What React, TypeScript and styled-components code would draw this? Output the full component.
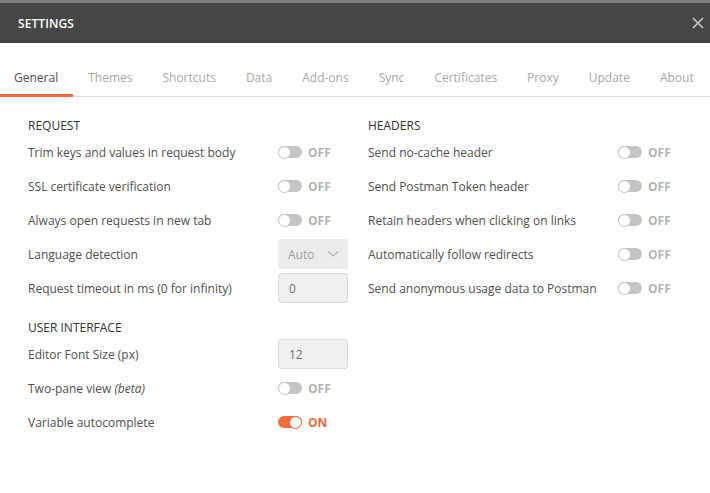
import React from "react";
import styled, { createGlobalStyle } from "styled-components";

const Global = createGlobalStyle`
  html, body { margin: 0; padding: 0; background: #ffffff; }
  body { font-family: "Open Sans", "Noto Sans", sans-serif; }
  * { box-sizing: border-box; }
`;

const Modal = styled.div`
  width: 710px;
  height: 493px;
  background: #ffffff;
  display: flex;
  flex-direction: column;
`;

const TitleBar = styled.div`
  height: 43px;
  background: #464646;
  border-top: 3px solid #7e7e7e;
  display: flex;
  align-items: center;
  justify-content: space-between;
  padding: 0 0 0 18px;
`;

const Title = styled.span`
  color: #ffffff;
  font-size: 12px;
  font-weight: 600;
  letter-spacing: 0.1px;
`;

const CloseBtn = styled.button`
  width: 24px;
  height: 24px;
  border: none;
  background: transparent;
  padding: 0;
  display: flex;
  align-items: center;
  justify-content: center;
  cursor: pointer;
`;

const Tabs = styled.div`
  display: flex;
  height: 54px;
  border-bottom: 1px solid #dedede;
`;

const Tab = styled.div<{ $active?: boolean }>`
  padding: 0 15px 8px 14px;
  margin-right: 1px;
  display: flex;
  align-items: flex-end;
  white-space: nowrap;
  font-size: 12px;
  color: ${(p) => (p.$active ? "#505050" : "#a8a8a8")};
  border-bottom: 3px solid ${(p) => (p.$active ? "#f26b3a" : "transparent")};
  margin-bottom: -1px;
`;

const Body = styled.div`
  display: grid;
  grid-template-columns: 320px 320px;
  column-gap: 20px;
  padding: 20px 28px 0;
  align-items: start;
`;

const Column = styled.div`
  display: flex;
  flex-direction: column;
`;

const Section = styled.div`
  display: flex;
  flex-direction: column;
  margin-bottom: 14px;
`;

const Heading = styled.div`
  height: 18px;
  line-height: 18px;
  font-size: 12px;
  color: #333333;
  text-transform: uppercase;
`;

const Row = styled.div`
  height: 34px;
  display: grid;
  grid-template-columns: 250px 70px;
  align-items: center;
`;

const Label = styled.span`
  font-size: 12px;
  color: #505050;
  white-space: nowrap;
  em { font-style: italic; }
`;

const ToggleWrap = styled.div`
  display: flex;
  align-items: center;
  gap: 6px;
`;

const Track = styled.div<{ $on?: boolean }>`
  width: 24px;
  height: 12px;
  border-radius: 6px;
  background: ${(p) => (p.$on ? "#f26b3a" : "#c4c4c4")};
  display: flex;
  justify-content: ${(p) => (p.$on ? "flex-end" : "flex-start")};
  align-items: center;
`;

const Knob = styled.div<{ $on?: boolean }>`
  width: 13px;
  height: 13px;
  border-radius: 50%;
  background: #ffffff;
  border: 1.5px solid ${(p) => (p.$on ? "#f26b3a" : "#c4c4c4")};
`;

const ToggleText = styled.span<{ $on?: boolean }>`
  font-size: 12px;
  font-weight: 700;
  color: ${(p) => (p.$on ? "#f26b3a" : "#b4b4b4")};
`;

const Select = styled.div`
  width: 70px;
  height: 30px;
  background: #ececec;
  border-radius: 2px;
  display: flex;
  align-items: center;
  justify-content: space-between;
  padding: 0 9px 0 10px;
  font-size: 12px;
  color: #a0a0a0;
`;

const Input = styled.div`
  width: 70px;
  height: 30px;
  background: #f0f0f0;
  border: 1px solid #dcdcdc;
  border-radius: 3px;
  display: flex;
  align-items: center;
  padding: 0 10px;
  font-size: 12px;
  color: #707070;
`;

const Toggle = ({ on }: { on?: boolean }) => (
  <ToggleWrap>
    <Track $on={on}>
      <Knob $on={on} />
    </Track>
    <ToggleText $on={on}>{on ? "ON" : "OFF"}</ToggleText>
  </ToggleWrap>
);

const tabs = [
  "General",
  "Themes",
  "Shortcuts",
  "Data",
  "Add-ons",
  "Sync",
  "Certificates",
  "Proxy",
  "Update",
  "About",
];

const headers = [
  "Send no-cache header",
  "Send Postman Token header",
  "Retain headers when clicking on links",
  "Automatically follow redirects",
  "Send anonymous usage data to Postman",
];

export default function App() {
  return (
    <>
      <Global />
      <Modal>
        <TitleBar>
          <Title>SETTINGS</Title>
          <CloseBtn aria-label="close">
            <svg width="12" height="12" viewBox="0 0 12 12">
              <path d="M1 1 L11 11 M11 1 L1 11" stroke="#c8c8c8" strokeWidth="1.6" />
            </svg>
          </CloseBtn>
        </TitleBar>
        <Tabs>
          {tabs.map((t, i) => (
            <Tab key={t} $active={i === 0}>
              {t}
            </Tab>
          ))}
        </Tabs>
        <Body>
          <Column>
            <Section>
              <Heading>Request</Heading>
              <Row>
                <Label>Trim keys and values in request body</Label>
                <Toggle />
              </Row>
              <Row>
                <Label>SSL certificate verification</Label>
                <Toggle />
              </Row>
              <Row>
                <Label>Always open requests in new tab</Label>
                <Toggle />
              </Row>
              <Row>
                <Label>Language detection</Label>
                <Select>
                  <span>Auto</span>
                  <svg width="12" height="8" viewBox="0 0 12 8">
                    <path d="M1 1.5 L6 6 L11 1.5" fill="none" stroke="#b0b0b0" strokeWidth="1.2" />
                  </svg>
                </Select>
              </Row>
              <Row>
                <Label>Request timeout in ms (0 for infinity)</Label>
                <Input>0</Input>
              </Row>
            </Section>
            <Section>
              <Heading>User Interface</Heading>
              <Row>
                <Label>Editor Font Size (px)</Label>
                <Input>12</Input>
              </Row>
              <Row>
                <Label>
                  Two-pane view <em>(beta)</em>
                </Label>
                <Toggle />
              </Row>
              <Row>
                <Label>Variable autocomplete</Label>
                <Toggle on />
              </Row>
            </Section>
          </Column>
          <Column>
            <Section>
              <Heading>Headers</Heading>
              {headers.map((h) => (
                <Row key={h}>
                  <Label>{h}</Label>
                  <Toggle />
                </Row>
              ))}
            </Section>
          </Column>
        </Body>
      </Modal>
    </>
  );
}
